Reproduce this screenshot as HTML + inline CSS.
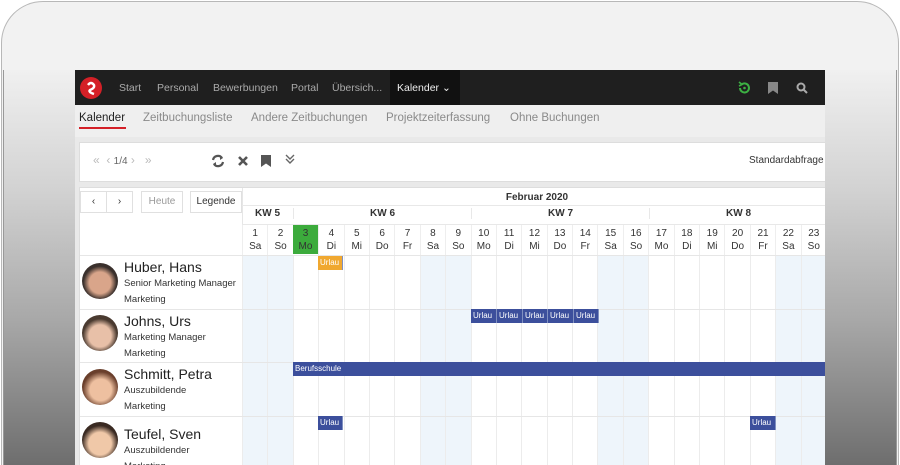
<!DOCTYPE html>
<html style="overflow:hidden"><head><meta charset="utf-8"><style>
*{margin:0;padding:0;box-sizing:border-box}
html,body{width:900px;height:465px;overflow:hidden}
body{background:#fff;font-family:"Liberation Sans",sans-serif;position:relative}
.frame{position:absolute;left:1px;top:1px;width:898px;height:464px;border-radius:42px 42px 0 0;border:1.5px solid #b8b8b8;border-bottom:none;background:#f2f2f2}
.side{position:absolute;top:70px;height:395px;background:linear-gradient(to bottom,#f0f0f0 0px,#d2d2d2 120px,#a8a8a8 250px,#6e6e6e 395px)}
.screen{position:absolute;left:75px;top:70px;width:750px;height:395px;background:#e9e9e9;overflow:hidden}
.a{position:absolute}
.nav{left:0;top:0;width:750px;height:35px;background:#1f1f1f}
.nav span{position:absolute;top:12px;font-size:10.5px;color:#aaa}
.sub{left:0;top:35px;width:750px;height:32px;background:#efefef}
.sub span{position:absolute;top:7px;font-size:11.5px;color:#8a8a8a}
.tb{left:4px;top:72px;width:750px;height:40px;background:#fff;border:1px solid #ddd}
.cal{left:4px;top:117px;width:750px;height:290px;background:#fff;border:1px solid #ddd}
.btn{position:absolute;border:1px solid #e0e0e0;background:#fff;font-size:10px;color:#333;text-align:center;line-height:20px;height:22px}
.cols{position:absolute;left:162px;top:0;width:590px;height:290px;display:flex}
.col{width:25.4px;flex:none;border-left:1px solid #ececec;height:290px;position:relative}
.we{background:#eef5fb}
.hd{position:absolute;left:162px;width:590px;font-size:10px;font-weight:bold;color:#333;text-align:center}
.row{position:absolute;left:0;width:760px;border-top:1px solid #e6e6e6}
.av{position:absolute;left:2px;width:36px;height:36px;border-radius:50%}
.nm{position:absolute;left:44px;font-size:14px;color:#222}
.t{position:absolute;left:44px;font-size:9.5px;color:#333}
.ev{position:absolute;height:14px;font-size:8px;color:#fff;background:#3c4f9c;line-height:14px;padding-left:2px;overflow:hidden;border-right:1px solid #8090c0}
.d{width:25.4px;flex:none;border-left:1px solid #eee;padding-top:2px}
</style></head><body>
<div class="frame"></div>
<div class="side" style="left:3px;width:72px;border-left:1px solid #999"></div>
<div class="side" style="left:825px;width:72px;border-right:1px solid #999"></div>
<div class="screen">
 <div class="a nav">
  <div class="a" style="left:5px;top:7px;width:22px;height:22px;border-radius:50%;background:#d42027"></div>
  <svg class="a" style="left:5px;top:7px" width="22" height="22"><path d="M8 8 Q11 4 14 8 Q15 11 10 13 Q8 15 14 17" stroke="#fff" stroke-width="2.4" fill="none"/></svg>
  <span style="left:44px">Start</span><span style="left:82px">Personal</span><span style="left:138px">Bewerbungen</span><span style="left:216px">Portal</span><span style="left:257px">Übersich...</span>
  <div class="a" style="left:315px;top:0;width:70px;height:35px;background:#111"></div>
  <span style="left:322px;color:#eee">Kalender ⌄</span>
  <svg class="a" style="left:662px;top:11px" width="14" height="14"><path d="M3 7 A4.5 4.5 0 1 0 5 3.2" stroke="#3cb043" stroke-width="2" fill="none"/><path d="M2 1 L5 3.5 L2 5" stroke="#3cb043" stroke-width="1.6" fill="none"/><circle cx="7.5" cy="7" r="1.3" fill="#3cb043"/></svg>
  <svg class="a" style="left:693px;top:12px" width="10" height="12"><path d="M0 0H10V12L5 8.5 0 12Z" fill="#888"/></svg>
  <svg class="a" style="left:721px;top:12px" width="12" height="12"><circle cx="5" cy="5" r="3.5" stroke="#aaa" stroke-width="2" fill="none"/><path d="M7.5 7.5 11 11" stroke="#aaa" stroke-width="2"/></svg>
 </div>
 <div class="a sub">
  <span style="left:4px;color:#222">Kalender</span>
  <div class="a" style="left:4px;top:22px;width:47px;height:2px;background:#d42027"></div>
  <span style="left:68px">Zeitbuchungsliste</span><span style="left:176px">Andere Zeitbuchungen</span><span style="left:311px">Projektzeiterfassung</span><span style="left:435px">Ohne Buchungen</span>
 </div>
 <div class="a tb">
  <div class="a" style="left:13px;top:10px;font-size:12px;color:#bbb">«&nbsp;&nbsp;‹&nbsp;<span style="font-size:10px;color:#666">1/4</span>&nbsp;›&nbsp;&nbsp;&nbsp;»</div>
  <svg class="a" style="left:131px;top:11px" width="14" height="14"><path d="M2 6 A5 5 0 0 1 11 4 M12 8 A5 5 0 0 1 3 10" stroke="#555" stroke-width="2.2" fill="none"/><path d="M9 1 12 4 9 6Z M5 13 2 10 5 8Z" fill="#555"/></svg>
  <svg class="a" style="left:157px;top:12px" width="12" height="12"><path d="M2 2 10 10 M10 2 2 10" stroke="#555" stroke-width="2.6"/></svg>
  <svg class="a" style="left:181px;top:12px" width="10" height="12"><path d="M0 0H10V12L5 8.5 0 12Z" fill="#555"/></svg>
  <svg class="a" style="left:204px;top:10px" width="12" height="12"><path d="M2 2 6 6 10 2 M2 6 6 10 10 6" stroke="#666" stroke-width="1.4" fill="none"/></svg>
  <div class="a" style="left:669px;top:12px;font-size:10px;color:#333">Standardabfrage</div>
 </div>
 <div class="a cal">
  <div class="cols">
   <div class="col we"></div><div class="col we"></div><div class="col"></div><div class="col"></div><div class="col"></div><div class="col"></div><div class="col"></div><div class="col we"></div><div class="col we"></div><div class="col"></div><div class="col"></div><div class="col"></div><div class="col"></div><div class="col"></div><div class="col we"></div><div class="col we"></div><div class="col"></div><div class="col"></div><div class="col"></div><div class="col"></div><div class="col"></div><div class="col we"></div><div class="col we"></div>
  </div>
  <div class="a" style="left:162px;top:0;width:590px;height:67px;background:#fff;border-left:1px solid #e6e6e6"></div>
  <div class="hd" style="top:4px">Februar 2020</div>
  <div class="a" style="left:162px;top:17px;width:590px;border-top:1px solid #e8e8e8"></div>
  <div class="a" style="left:162px;top:36px;width:590px;border-top:1px solid #e8e8e8"></div>
  <div class="a" style="left:162px;top:20px;width:51px;text-align:center;font-size:10px;font-weight:bold;color:#333">KW 5</div>
  <div class="a" style="left:213px;top:20px;width:178px;text-align:center;font-size:10px;font-weight:bold;color:#333;border-left:1px solid #e8e8e8">KW 6</div>
  <div class="a" style="left:391px;top:20px;width:178px;text-align:center;font-size:10px;font-weight:bold;color:#333;border-left:1px solid #e8e8e8">KW 7</div>
  <div class="a" style="left:569px;top:20px;width:178px;text-align:center;font-size:10px;font-weight:bold;color:#333;border-left:1px solid #e8e8e8">KW 8</div>
  <div class="a" style="left:213px;top:37px;width:25px;height:29px;background:#3cab3c"></div>
  <div class="a" style="left:162px;top:37px;width:590px;height:30px;display:flex;font-size:10px;color:#333;line-height:13px;text-align:center">
   <div class="d">1<br>Sa</div><div class="d">2<br>So</div><div class="d" style="border-left:none">3<br>Mo</div><div class="d">4<br>Di</div><div class="d">5<br>Mi</div><div class="d">6<br>Do</div><div class="d">7<br>Fr</div><div class="d">8<br>Sa</div><div class="d">9<br>So</div><div class="d">10<br>Mo</div><div class="d">11<br>Di</div><div class="d">12<br>Mi</div><div class="d">13<br>Do</div><div class="d">14<br>Fr</div><div class="d">15<br>Sa</div><div class="d">16<br>So</div><div class="d">17<br>Mo</div><div class="d">18<br>Di</div><div class="d">19<br>Mi</div><div class="d">20<br>Do</div><div class="d">21<br>Fr</div><div class="d">22<br>Sa</div><div class="d">23<br>So</div>
  </div>
  <div class="btn" style="left:0;top:3px;width:27px">&lsaquo;</div>
  <div class="btn" style="left:26px;top:3px;width:27px">&rsaquo;</div>
  <div class="btn" style="left:61px;top:3px;width:42px;color:#999">Heute</div>
  <div class="btn" style="left:110px;top:3px;width:52px">Legende</div>

  <div class="row" style="top:67px;height:54px">
   <div class="av" style="top:7px;background:radial-gradient(circle at 50% 55%,#d9a58a 40%,#3a302c 62%)"></div>
   <div class="nm" style="top:3px">Huber, Hans</div>
   <div class="t" style="top:22px">Senior Marketing Manager</div>
   <div class="t" style="top:38px">Marketing</div>
  </div>
  <div class="row" style="top:121px;height:54px">
   <div class="av" style="top:5px;background:radial-gradient(circle at 50% 58%,#e8c0a8 40%,#4a3a30 62%)"></div>
   <div class="nm" style="top:3px">Johns, Urs</div>
   <div class="t" style="top:22px">Marketing Manager</div>
   <div class="t" style="top:38px">Marketing</div>
  </div>
  <div class="row" style="top:174px;height:54px">
   <div class="av" style="top:6px;background:radial-gradient(circle at 52% 58%,#eec0a0 38%,#6a3f2c 64%)"></div>
   <div class="nm" style="top:3px">Schmitt, Petra</div>
   <div class="t" style="top:22px">Auszubildende</div>
   <div class="t" style="top:38px">Marketing</div>
  </div>
  <div class="row" style="top:228px;height:62px">
   <div class="av" style="top:5px;background:radial-gradient(circle at 50% 60%,#f0c8a8 40%,#3a2a22 64%)"></div>
   <div class="nm" style="top:9px">Teufel, Sven</div>
   <div class="t" style="top:28px">Auszubildender</div>
   <div class="t" style="top:44px">Marketing</div>
  </div>

  <div class="ev" style="left:238px;top:68px;width:25px;background:#f0a830">Urlau</div>
  <div class="ev" style="left:391px;top:121px;width:26px">Urlau</div>
  <div class="ev" style="left:417px;top:121px;width:26px">Urlau</div>
  <div class="ev" style="left:443px;top:121px;width:25px">Urlau</div>
  <div class="ev" style="left:468px;top:121px;width:26px">Urlau</div>
  <div class="ev" style="left:494px;top:121px;width:25px">Urlau</div>
  <div class="ev" style="left:213px;top:174px;width:540px">Berufsschule</div>
  <div class="ev" style="left:238px;top:228px;width:25px">Urlau</div>
  <div class="ev" style="left:670px;top:228px;width:26px">Urlau</div>
 </div>
</div>
</body></html>
